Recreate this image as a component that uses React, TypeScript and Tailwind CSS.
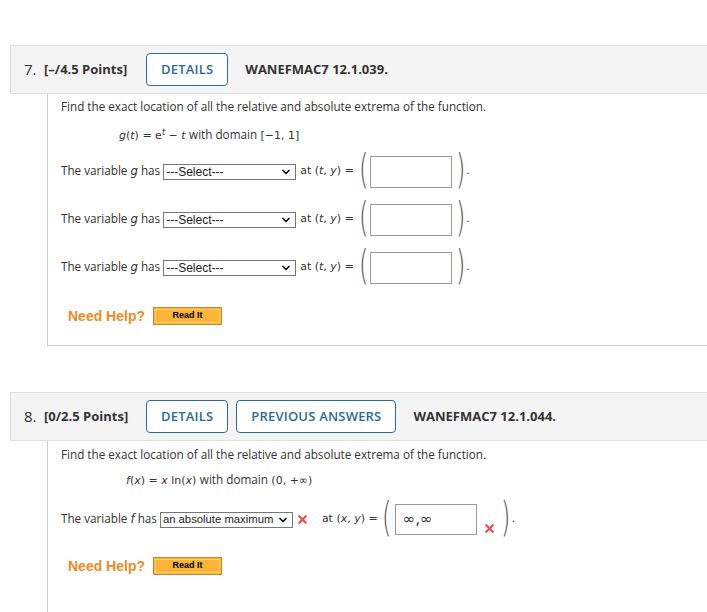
import { ChevronDown, X } from "lucide-react";

const body = { fontFamily: '"Open Sans", "Noto Sans", sans-serif' };
const math = { fontFamily: '"DejaVu Sans", Verdana, sans-serif' };
const arial = { fontFamily: '"Liberation Sans", Arial, sans-serif' };

function HeaderButton({ label }: { label: string }) {
  return (
    <div className="h-[33px] px-[14px] flex items-center rounded-[4px] border border-[#2a6a9a] bg-white text-[#2a6a9a] text-[13px] font-semibold tracking-[0.2px]">
      {label}
    </div>
  );
}

function Header({ num, points, code, prev }: { num: string; points: string; code: string; prev?: boolean }) {
  return (
    <div
      className="ml-[10px] h-[49px] flex items-center bg-[#f4f4f4] border-y border-l border-[#dedede] pl-[13px] text-[#333]"
      style={body}
    >
      <span className="text-[15px] w-[20px]">{num}</span>
      <span className="text-[13px] font-bold w-[102px]">{points}</span>
      <div className="flex gap-[8px]">
        <HeaderButton label="DETAILS" />
        {prev && <HeaderButton label="PREVIOUS ANSWERS" />}
      </div>
      <span className="text-[13px] font-bold ml-[17px]">{code}</span>
    </div>
  );
}

function Select({ text, small }: { text: string; small?: boolean }) {
  return (
    <div
      className={
        "w-[133px] h-[16px] border border-[#767676] bg-white flex items-center justify-between pl-[2px] pr-[3px] text-[#222] whitespace-nowrap " +
        (small ? "text-[11.3px]" : "text-[12px]")
      }
      style={arial}
    >
      <span className="leading-none">{text}</span>
      <ChevronDown size={12} strokeWidth={3.4} className="text-[#111] shrink-0" />
    </div>
  );
}

function Paren({ ch }: { ch: string }) {
  return (
    <span className="w-[11px] flex justify-center">
      <span className="inline-block text-[40px] leading-none font-extralight text-[#555] scale-x-[0.6] -mt-[6px]" style={math}>
        {ch}
      </span>
    </span>
  );
}

function Wrong({ className = "" }: { className?: string }) {
  return <X size={13} strokeWidth={4.2} className={"text-[#ef4b55] shrink-0 " + className} />;
}

function ReadIt() {
  return (
    <div className="flex items-center gap-[8px]">
      <span className="text-[14px] font-bold text-[#ef8a21]" style={arial}>
        Need Help?
      </span>
      <div className="w-[69px] h-[18px] border border-[#d1822a] bg-[#fbb63a] p-[1px]">
        <div className="h-full border border-[#fccf6a] flex items-center justify-center text-[9px] font-bold text-black" style={arial}>
          Read It
        </div>
      </div>
    </div>
  );
}

function Row() {
  return (
    <div className="flex items-center h-[32px] text-[11px] text-[#333]" style={math}>
      <span style={body} className="text-[11.7px] mr-[3px]">
        The variable <i style={math}>g</i> has
      </span>
      <Select text="---Select---" />
      <span className="ml-[4px] mr-[4px]">
        at (<i>t</i>, <i>y</i>) =
      </span>
      <Paren ch="(" />
      <div className="w-[82px] h-[32px] border border-[#999] bg-white ml-[1px] mr-[3px]" />
      <Paren ch=")" />
      <span>.</span>
    </div>
  );
}

export default function App() {
  return (
    <div className="w-[707px] h-[612px] bg-white overflow-hidden pt-[45px]">
      <Header num="7." points="[–/4.5 Points]" code="WANEFMAC7 12.1.039." />
      <div className="ml-[47px] border-l border-b border-[#cccccc] h-[252px] pl-[13px] pt-[4px] text-[#333]">
        <p className="text-[11.7px] leading-[16px]" style={body}>
          Find the exact location of all the relative and absolute extrema of the function.
        </p>
        <p className="text-[11px] ml-[58px] mt-[12px]" style={math}>
          <i>g</i>(<i>t</i>) = e<sup className="text-[8px]"><i>t</i></sup> − <i>t</i>{" "}
          <span style={body} className="text-[11.7px]">with domain</span> [−1, 1]
        </p>
        <div className="mt-[11px] flex flex-col gap-[16px]">
          <Row />
          <Row />
          <Row />
        </div>
        <div className="mt-[22px] ml-[7px]">
          <ReadIt />
        </div>
      </div>

      <div className="h-[46px]" />
      <Header num="8." points="[0/2.5 Points]" code="WANEFMAC7 12.1.044." prev />
      <div className="ml-[47px] border-l border-[#cccccc] h-[200px] pl-[13px] pt-[5px] text-[#333]">
        <p className="text-[11.7px] leading-[16px]" style={body}>
          Find the exact location of all the relative and absolute extrema of the function.
        </p>
        <p className="text-[11px] ml-[65px] mt-[9px]" style={math}>
          <i>f</i>(<i>x</i>) = <i>x</i> ln(<i>x</i>) <span style={body} className="text-[11.7px]">with domain</span> (0, +∞)
        </p>
        <div className="mt-[14px] flex items-center h-[32px] text-[11px]" style={math}>
          <span style={body} className="text-[11.7px] mr-[3px]">
            The variable <i style={math}>f</i> has
          </span>
          <Select text="an absolute maximum" small />
          <Wrong className="ml-[3px]" />
          <span className="ml-[13px] mr-[4px]">
            at (<i>x</i>, <i>y</i>) =
          </span>
          <Paren ch="(" />
          <div className="w-[82px] h-[31px] border border-[#999] bg-white ml-[2px] flex items-center pl-[7px] text-[15px] leading-none">
            ∞,∞
          </div>
          <Wrong className="self-end ml-[6px] mb-[1px]" />
          <span className="ml-[5px] flex">
            <Paren ch=")" />
          </span>
          <span>.</span>
        </div>
        <div className="mt-[20px] ml-[7px]">
          <ReadIt />
        </div>
      </div>
    </div>
  );
}
